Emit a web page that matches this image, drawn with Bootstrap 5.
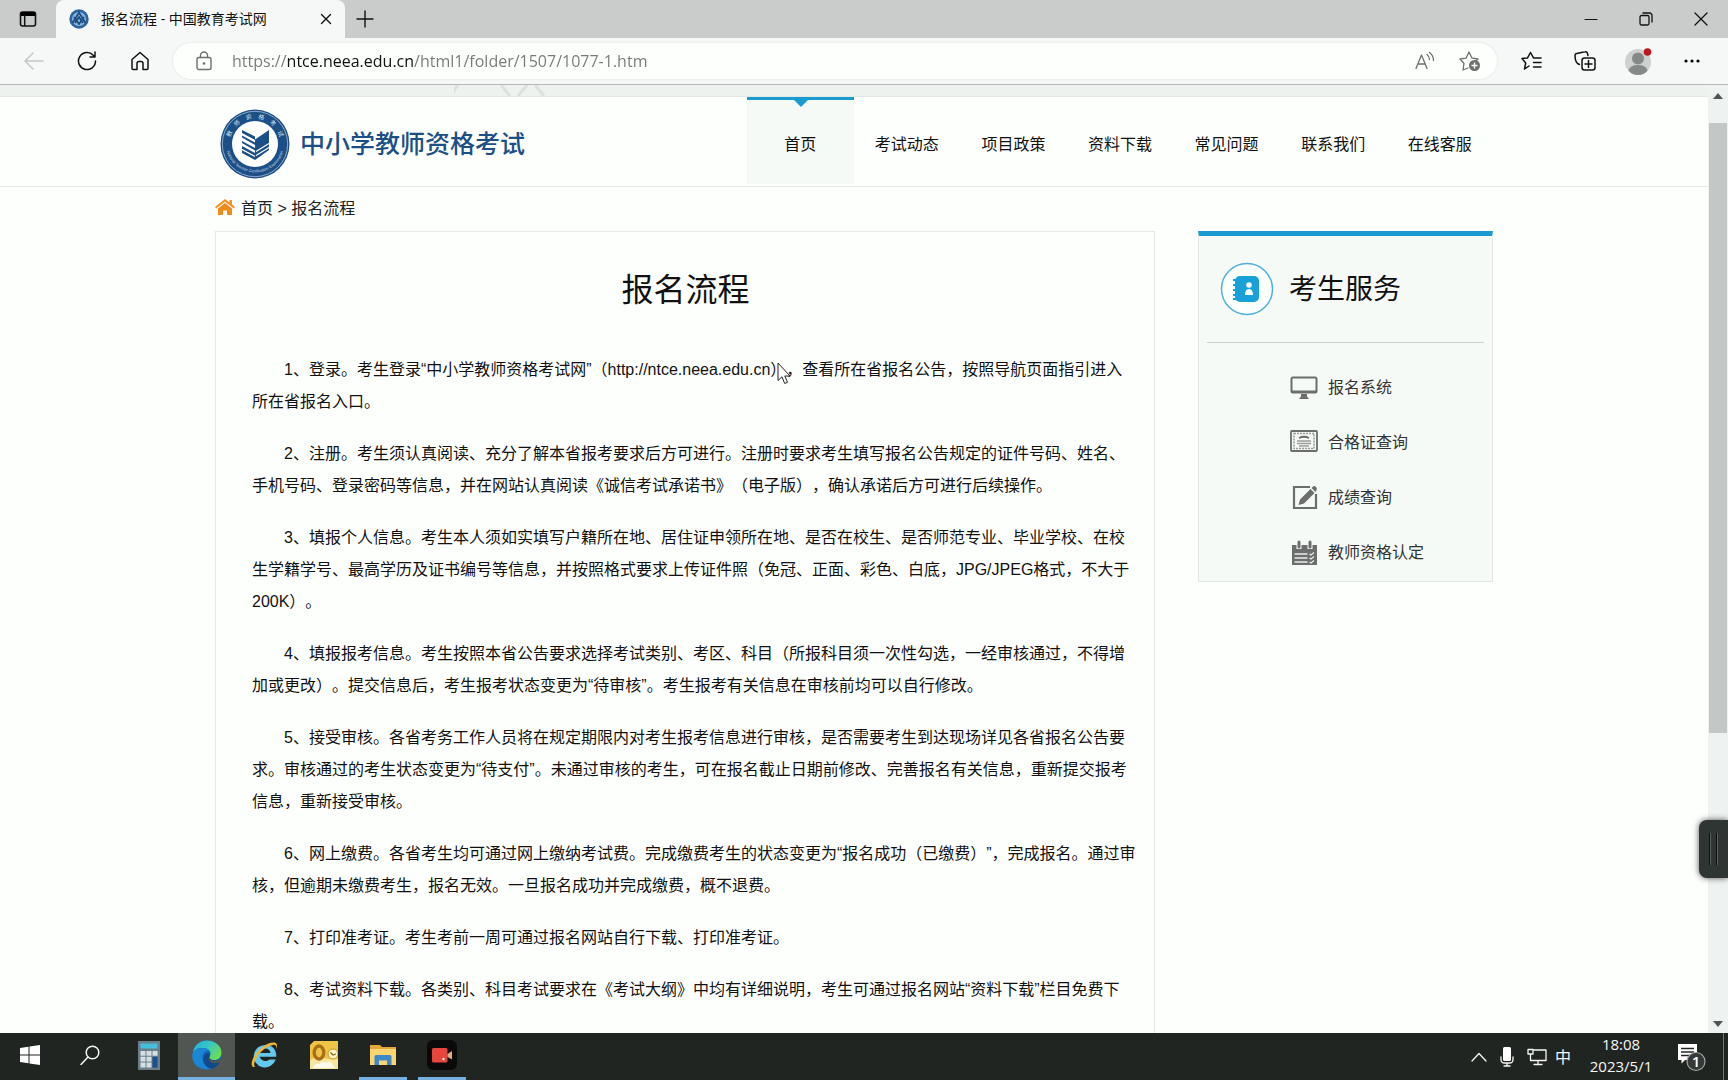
<!DOCTYPE html>
<html lang="zh-CN">
<head>
<meta charset="utf-8">
<meta name="viewport" content="width=device-width, initial-scale=1">
<title>报名流程 - 中国教育考试网</title>
<link href="https://cdn.jsdelivr.net/npm/bootstrap@5.3.0/dist/css/bootstrap.min.css" rel="stylesheet">
<style>
:root{--blue:#1a9bcf;--navy:#1c4f86}
body{font-family:"Liberation Sans","Noto Sans CJK SC",sans-serif;font-size:16px;color:#111;background:#fdfffd;line-height:24px;text-spacing-trim:space-all}
.ui-font{font-family:"Open Sans","Noto Sans CJK SC",sans-serif}
button{border:0;background:none;padding:0;color:inherit}
a{color:inherit;text-decoration:none}
svg{display:block;flex:none}
.ln{fill:none;stroke:currentColor;stroke-linecap:round;stroke-linejoin:round}
/* browser chrome */
.tabstrip{height:38px;background:#cacccb}
.tab-menu{width:56px}
.tab-open{width:289px;background:#f5f8f6;border-radius:8px 8px 0 0;padding:0 11px 0 13px;font-size:14px}
.new-tab{width:40px}
.win-btn{width:55px}
.toolbar{height:46px;background:#f5f8f6;color:#111;padding:0 8px 0 7px}
.tool-btn{width:53px;height:38px}
.tool-btn.more{width:56px}
.omnibox{height:36px;border-radius:18px;background:#fdfffd;box-shadow:0 0 2px #d5d9d7;margin:0 8px 0 7px;padding:0 16px 0 23px;color:#6d706e}
.omnibox input{border:0;outline:0;min-width:0;font-size:16px;padding:0;margin:0 16px 0 20px;color:transparent;background:linear-gradient(90deg,#767977 0 54px,#111 54px 182px,#767977 182px);-webkit-background-clip:text;background-clip:text}
.viewport-area{border-top:1px solid #b4b9b6;min-height:0}
.scroller{width:20px;background:#eef2f0;padding:8px 0 6px}
.scroll-thumb{background:#c3c7c5;margin:24px 1px 0;height:610px}
/* site */
.top-strip{height:11px;background:#eef2ef}
.site-head{border-top:1px solid #e4e8e5;border-bottom:1px solid #e4e8e5;height:91px}
.wrap{max-width:1278px;width:100%;margin:0 auto}
.brand{padding:6px 0 0 5px}
.logo-name{font-size:25px;font-weight:500;color:var(--navy);margin-left:10px}
.site-nav{width:746px}
.site-nav a{height:87px;border-top:3px solid transparent;padding-top:6px}
.site-nav a.active{border-color:var(--blue);background:#f6faf7}
.site-nav a.active::before{content:"";position:absolute;top:0;left:50%;margin-left:-6px;border:7px solid transparent;border-top-color:var(--blue);border-bottom:0}
.crumbs{height:44px;gap:6px;color:#222}
.crumbs svg{margin-bottom:4px}
.article-box{width:940px;border:1px solid #e6eae7;padding:38px 17px 0 36px;margin-right:43px}
.article-box h1{font-size:32px;line-height:40px;font-weight:400;margin:0 0 44px;padding-right:18px}
.article-box p{line-height:32px;margin:0 0 20px;text-indent:2em}
.service-box{width:295px;height:351px;border:1px solid #e2e6e3;border-top:5px solid var(--blue);background:#f6faf7}
.service-title{height:106px;padding-left:21px;font-size:28px}
.service-title h2{font-size:28px;font-weight:400;margin:2px 0 0 15px}
.service-rule{height:1px;background:#cdd1cf;margin:0 8px}
.service-list{padding:17px 0 0 91px}
.service-list a{height:55px;gap:10px;color:#333}
.service-list svg{color:#6b6e6c}
/* overlays */
.side-handle{right:0;top:820px;width:29px;height:58px;background:#2f3532;border-radius:8px 0 0 8px;box-shadow:0 0 6px #555;gap:5px}
.side-handle i{width:2px;height:32px;background:#0d100e;border-right:1px solid #59605c}
.pointer{left:777px;top:362px}
/* task bar */
.taskbar{height:48px;background:#212522;color:#f5f7f5;z-index:2}
.task{width:59px;border-bottom:3px solid transparent}
.task.start{width:60px}
.task.current{background:#525653;border-color:#76b0e0;width:57px}
.task.running{position:relative}
.task.running::after{content:"";position:absolute;left:6px;right:5px;bottom:-3px;height:3px;background:#76b0e0}
.tray button{margin-right:13px}
.tray .ime{margin-right:8px}
.tray .net{margin-right:8px}
.clock{font-size:15px;line-height:22px;width:84px;margin-right:12px;padding-bottom:3px}
</style>
</head>
<body class="vh-100 d-flex flex-column overflow-hidden position-relative">

<header class="ui-font">
  <div class="tabstrip d-flex">
    <button class="tab-menu d-flex align-items-center justify-content-center" aria-label="标签页操作"><svg width="18" height="18" viewBox="0 0 18 18"><rect x="1.5" y="2" width="15" height="14" rx="2" class="ln" stroke-width="1.6"/><path d="M2 2h14v4H2z"/><path d="M5.7 5v11" stroke="#111" stroke-width="1.5"/></svg></button>
    <div class="tab-open d-flex align-items-center">
      <svg width="20" height="20" viewBox="0 0 20 20"><circle cx="10" cy="10" r="9.7" fill="#2c659d"/><circle cx="10" cy="10" r="7" fill="#8db5d8"/><path d="M3.5 14 10 3.5 16.500 14M6 14l4-6 4 6M5 8l5 7 5-7" fill="none" stroke="#174b82" stroke-width="1.7"/></svg>
      <span class="ms-2 ps-1 me-auto">报名流程 - 中国教育考试网</span>
      <button aria-label="关闭标签页"><svg width="16" height="16" viewBox="0 0 16 16"><path d="m3.500 3.500 9 9m0-9-9 9" class="ln" stroke-width="1.4"/></svg></button>
    </div>
    <button class="new-tab d-flex align-items-center justify-content-center me-auto" aria-label="新建标签页"><svg width="18" height="18" viewBox="0 0 18 18"><path d="M9 1v16M1 9h16" class="ln" stroke-width="1.4"/></svg></button>
    <button class="win-btn d-flex align-items-center justify-content-center" aria-label="最小化"><svg width="14" height="14" viewBox="0 0 14 14"><path d="M1 7.500h12" class="ln" stroke-width="1.2"/></svg></button>
    <button class="win-btn d-flex align-items-center justify-content-center" aria-label="还原"><svg width="14" height="14" viewBox="0 0 14 14"><rect x="1" y="3.500" width="9" height="9.500" rx="1.500" class="ln" stroke-width="1.3"/><path d="M4 1h6.500A2.500 2.500 0 0 1 13 3.500V10" class="ln" stroke-width="1.3"/></svg></button>
    <button class="win-btn d-flex align-items-center justify-content-center" aria-label="关闭"><svg width="14" height="14" viewBox="0 0 14 14"><path d="m1 1 12 12m0-12L1 13" class="ln" stroke-width="1.3"/></svg></button>
  </div>
  <div class="toolbar d-flex align-items-center">
    <button class="tool-btn d-flex align-items-center justify-content-center text-black-50" aria-label="后退"><svg width="20" height="18" viewBox="0 0 20 18" opacity=".4"><path d="M19 9H1m8-8L1 9l8 8" class="ln" stroke-width="1.4"/></svg></button>
    <button class="tool-btn d-flex align-items-center justify-content-center" aria-label="刷新"><svg width="20" height="20" viewBox="0 0 20 20"><path d="M18.500 10a8.500 8.500 0 1 1-2.300-5.800L17.500 5.500M18 1v5h-5" class="ln" stroke-width="1.500"/></svg></button>
    <button class="tool-btn d-flex align-items-center justify-content-center" aria-label="主页"><svg width="20" height="20" viewBox="0 0 20 20"><path d="M2 8.500 10 1.500l8 7V17.500a1 1 0 0 1-1 1h-4v-6a2 2 0 0 0-2-2h-2a2 2 0 0 0-2 2v6H3a1 1 0 0 1-1-1z" class="ln" stroke-width="1.5"/></svg></button>
    <div class="omnibox d-flex align-items-center flex-fill">
      <svg width="16" height="20" viewBox="0 0 16 20"><rect x="1" y="6.500" width="14" height="12" rx="2" class="ln" stroke-width="1.400"/><path d="M4.500 6.500V4.500a3.500 3.500 0 0 1 7 0v2" class="ln" stroke-width="1.400"/><circle cx="8" cy="12.500" r="1.300" fill="currentColor"/></svg>
      <input class="flex-fill" type="text" aria-label="地址栏" value="https://ntce.neea.edu.cn/html1/folder/1507/1077-1.htm">
      <button class="me-4" aria-label="朗读此页"><svg width="20" height="20" viewBox="0 0 20 20"><path d="M1 17.500 6.500 4l5.500 13.500M3 13h7M12 3.500q2.500 2 2.500 5M14.500 1.500q4 3 4 8" class="ln" stroke-width="1.3"/></svg></button>
      <button aria-label="收藏此页"><svg width="22" height="22" viewBox="0 0 22 22"><path d="m9 18-5 2 1-6.500L1 9l6-.8L10 2l3 6.200 6 .8-1.500 1.500" class="ln" stroke-width="1.300"/><circle cx="15.500" cy="15.500" r="5.500" fill="currentColor"/><path d="M15.500 12.500v6m-3-3h6" stroke="#fff" stroke-width="1.400"/></svg></button>
    </div>
    <button class="tool-btn d-flex align-items-center justify-content-center" aria-label="收藏夹"><svg width="22" height="20" viewBox="0 0 22 20"><path d="m8 15-4.500 3 1.200-6L1 7.500l5.500-.6L9.500 1.500l3 5.400H20M12.500 11.500H20M12.500 16H20" class="ln" stroke-width="1.500"/></svg></button>
    <button class="tool-btn d-flex align-items-center justify-content-center" aria-label="集锦"><svg width="22" height="22" viewBox="0 0 22 22"><rect x="8" y="8" width="13" height="12" rx="2.500" class="ln" stroke-width="1.500"/><path d="M14.500 10.500v7m-3.500-3.500h7M5.500 14.500 3.500 13.500A8 8 0 0 1 1.300 9L1 5.500a2 2 0 0 1 1.700-2L11 1.800a2 2 0 0 1 2.400 1.400l.6 2.300" class="ln" stroke-width="1.500"/></svg></button>
    <button class="tool-btn d-flex align-items-center justify-content-center" aria-label="个人资料"><svg width="28" height="30" viewBox="0 0 28 30"><circle cx="14" cy="16" r="13" fill="#cdd1cf"/><circle cx="14" cy="12.500" r="6" fill="#858987"/><path d="M4.500 24.500q1.500-5.500 9.500-5.500t9.500 5.500Q20 29 14 29t-9.500-4.500z" fill="#858987"/><circle cx="23.500" cy="6" r="3.800" fill="#bd1622"/></svg></button>
    <button class="tool-btn more d-flex align-items-center justify-content-center" aria-label="设置及其他"><svg width="18" height="6" viewBox="0 0 18 6"><circle cx="3" cy="3" r="1.600"/><circle cx="9" cy="3" r="1.600"/><circle cx="15" cy="3" r="1.600"/></svg></button>
  </div>
</header>

<div class="viewport-area d-flex flex-fill overflow-hidden">
  <div class="flex-fill">
    <div class="top-strip"><svg class="mx-auto" width="800" height="11" viewBox="0 0 800 11"><path d="M4 0q-4 4-6 11M47 0l9 11M73 0l-9 11M81 0l9 11" stroke="#dce1de" stroke-width="3" fill="none"/></svg></div>
    <div class="site-head">
      <div class="wrap d-flex">
        <a href="#" class="brand d-flex align-items-center me-auto">
          <svg width="70" height="70" viewBox="0 0 70 70" role="img" aria-label="中小学教师资格考试">
            <defs><path id="arcTop" d="M9.500 35a25.500 25.500 0 0 1 51 0"/><path id="arcLow" d="M5.500 34a29.500 29.500 0 0 0 59 0"/></defs>
            <circle cx="35" cy="35" r="34.500" fill="#1c4f86"/><circle cx="35" cy="35" r="32.700" fill="none" stroke="#a9c1d8" stroke-width=".8"/><circle cx="35" cy="35" r="23" fill="#fff"/>
            <text font-size="6" fill="#d9e6f2" font-family="Noto Sans CJK SC" text-anchor="middle"><textPath href="#arcTop" startOffset="50%">教　师　资　格　考　试</textPath></text>
            <text font-size="4" fill="#c5d7e8" font-family="Liberation Sans" text-anchor="middle"><textPath href="#arcLow" startOffset="50%">National Teacher Certification Examination</textPath></text>
            <g fill="#1c4f86"><path d="M35 30.500 49 21v20L35 51 22 44v-3l13 6z"/><path d="m22 21 13 6.500V31l-13-7zM22 26.500l13 7V36l-13-7.500zM22 32l13 7v2.500L22 34zM22 37l13 7v3l-13-7z"/></g>
            <path d="m22 25 13 7m-13-1.500 13 7m-13-2 13 7m-13-2 13 7M36 42.500l13-8M36 46.500l13-8" stroke="#fff" stroke-width="1.100"/>
          </svg>
          <span class="logo-name">中小学教师资格考试</span>
        </a>
        <nav class="site-nav">
          <ul class="nav nav-fill flex-nowrap">
            <li class="nav-item w-100"><a class="active position-relative d-flex align-items-center justify-content-center" href="#">首页</a></li>
            <li class="nav-item w-100"><a class="d-flex align-items-center justify-content-center" href="#">考试动态</a></li>
            <li class="nav-item w-100"><a class="d-flex align-items-center justify-content-center" href="#">项目政策</a></li>
            <li class="nav-item w-100"><a class="d-flex align-items-center justify-content-center" href="#">资料下载</a></li>
            <li class="nav-item w-100"><a class="d-flex align-items-center justify-content-center" href="#">常见问题</a></li>
            <li class="nav-item w-100"><a class="d-flex align-items-center justify-content-center" href="#">联系我们</a></li>
            <li class="nav-item w-100"><a class="d-flex align-items-center justify-content-center" href="#">在线客服</a></li>
          </ul>
        </nav>
      </div>
    </div>
    <div class="wrap">
      <nav class="crumbs d-flex align-items-center" aria-label="当前位置">
        <svg width="20" height="17" viewBox="0 0 20 17"><path d="M10 0 0 8l1.200 1.500L10 2.700l8.800 6.800L20 8l-3-2.500V1h-2.500v2.500z" fill="#f2922b"/><path d="m10 4-7 5.500V16h5v-4.500h4V16h5V9.500z" fill="#f08a1d"/></svg>
        <span><a href="#">首页</a> &gt; <a href="#">报名流程</a></span>
      </nav>
      <div class="d-flex align-items-start">
        <main class="article-box flex-shrink-0">
          <h1 class="text-center">报名流程</h1>
          <p>1、登录。考生登录“中小学教师资格考试网”（http://ntce.neea.edu.cn），查看所在省报名公告，按照导航页面指引进入所在省报名入口。</p>
          <p>2、注册。考生须认真阅读、充分了解本省报考要求后方可进行。注册时要求考生填写报名公告规定的证件号码、姓名、手机号码、登录密码等信息，并在网站认真阅读《诚信考试承诺书》（电子版），确认承诺后方可进行后续操作。</p>
          <p>3、填报个人信息。考生本人须如实填写户籍所在地、居住证申领所在地、是否在校生、是否师范专业、毕业学校、在校生学籍学号、最高学历及证书编号等信息，并按照格式要求上传证件照（免冠、正面、彩色、白底，JPG/JPEG格式，不大于200K）。</p>
          <p>4、填报报考信息。考生按照本省公告要求选择考试类别、考区、科目（所报科目须一次性勾选，一经审核通过，不得增加或更改）。提交信息后，考生报考状态变更为“待审核”。考生报考有关信息在审核前均可以自行修改。</p>
          <p>5、接受审核。各省考务工作人员将在规定期限内对考生报考信息进行审核，是否需要考生到达现场详见各省报名公告要求。审核通过的考生状态变更为“待支付”。未通过审核的考生，可在报名截止日期前修改、完善报名有关信息，重新提交报考信息，重新接受审核。</p>
          <p>6、网上缴费。各省考生均可通过网上缴纳考试费。完成缴费考生的状态变更为“报名成功（已缴费）”，完成报名。通过审核，但逾期未缴费考生，报名无效。一旦报名成功并完成缴费，概不退费。</p>
          <p>7、打印准考证。考生考前一周可通过报名网站自行下载、打印准考证。</p>
          <p>8、考试资料下载。各类别、科目考试要求在《考试大纲》中均有详细说明，考生可通过报名网站“资料下载”栏目免费下载。</p>
        </main>
        <aside class="service-box">
          <div class="service-title d-flex align-items-center">
            <svg width="54" height="54" viewBox="0 0 54 54"><circle cx="27" cy="27" r="25.500" fill="#fbfffd" stroke="#4fb0da" stroke-width="1.500"/><rect x="15" y="14" width="24" height="26" rx="5" fill="#18a0d8"/><path d="M13 18h3m-3 5h3m-3 5h3m-3 5h3m-3 4h3" stroke="#18a0d8" stroke-width="2.200"/><circle cx="29" cy="23" r="2.800" fill="#fff"/><path d="M25 33q0-6 4-6t4 6z" fill="#fff"/></svg>
            <h2>考生服务</h2>
          </div>
          <div class="service-rule"></div>
          <div class="service-list">
            <a class="d-flex align-items-center" href="#"><svg width="28" height="24" viewBox="0 0 28 24"><rect x="1.500" y="1.500" width="25" height="15" rx="1.500" fill="none" stroke="currentColor" stroke-width="2"/><path d="M1 14.500h26v2.500H1zM11 18h6v2.500l2 2.500H9l2-2.500z" fill="currentColor"/></svg>报名系统</a>
            <a class="d-flex align-items-center" href="#"><svg width="28" height="28" viewBox="0 0 28 28"><rect x="1" y="2" width="26" height="20" rx="1" fill="none" stroke="currentColor" stroke-width="1.800"/><rect x="4" y="4.500" width="20" height="15" fill="none" stroke="#9a9d9b" stroke-width="1.600" stroke-dasharray="2 1"/><path d="M9 9q5-2.500 10 0" fill="none" stroke="currentColor" stroke-width="1.800"/><path d="M7 12h14M7 14.500h14M9 17h10" stroke="#9a9d9b" stroke-width="1.500"/></svg>合格证查询</a>
            <a class="d-flex align-items-center" href="#"><svg width="28" height="26" viewBox="0 0 28 26"><path d="M20 2H4v21h22V9" fill="none" stroke="currentColor" stroke-width="2.200"/><path d="m8.500 20 1.500-5.500L20.500 4l4 4L14 18.500zM21.500 3l1.500-1.500q1.500-1 3 .5t.5 3L25.500 7z" fill="currentColor"/></svg>成绩查询</a>
            <a class="d-flex align-items-center" href="#"><svg width="28" height="26" viewBox="0 0 28 26"><path d="M2 5h25v20H2z" fill="currentColor"/><path d="M6.500 0h5v9h-5zM17.500 0h5v9h-5z" fill="#f7faf8"/><path d="M9 2v5M20 2v5" stroke="currentColor" stroke-width="3" stroke-linecap="round"/><path d="M4.500 14h13M4.500 18h13M4.500 22h13" stroke="#e9ecea" stroke-width="1.500"/><path d="m19.500 14 1.500 1 3-2.500m-4.500 5.500 1.500 1 3-2.500m-4.500 5.500 1.500 1 3-2.500" fill="none" stroke="#e9ecea" stroke-width="1.200"/></svg>教师资格认定</a>
          </div>
        </aside>
      </div>
    </div>
  </div>
  <div class="scroller d-flex flex-column">
    <svg class="mx-auto" width="10" height="6" viewBox="0 0 10 6"><path d="M5 0 0 6h10z" fill="#505452"/></svg>
    <div class="scroll-thumb"></div>
    <svg class="mx-auto mt-auto" width="10" height="6" viewBox="0 0 10 6"><path d="M5 6 0 0h10z" fill="#505452"/></svg>
  </div>
</div>

<footer class="taskbar ui-font d-flex">
  <button class="task start d-flex align-items-center justify-content-center" aria-label="开始"><svg width="20" height="20" viewBox="0 0 20 20" fill="#fff"><path d="M0 3l8.500-1.300V9.500H0zM9.500 1.500 20 0v9.500H9.500zM0 10.500h8.500v7.800L0 17zM9.500 10.500H20V20L9.500 18.500z"/></svg></button>
  <button class="task d-flex align-items-center justify-content-center" aria-label="搜索"><svg width="20" height="20" viewBox="0 0 20 20"><circle cx="12.500" cy="7.500" r="6.300" class="ln" stroke-width="1.500"/><path d="M8 12 1 19.500" class="ln" stroke-width="1.500"/></svg></button>
  <button class="task d-flex align-items-center justify-content-center" aria-label="计算器"><svg width="22" height="29" viewBox="0 0 22 29"><path d="M0 0h22v29H0z" fill="#6b7f8a"/><path d="M2.500 2.500h17v5h-17z" fill="#45bede"/><path d="M2.500 10h5v4.800h-5zM8.500 10h5v4.800h-5zM14.500 10h5v4.800h-5zM2.500 15.800h5v4.800h-5zM8.500 15.800h5v4.800h-5zM2.500 21.600h5v5h-5zM8.500 21.600h5v5h-5z" fill="#d5dee3"/><path d="M14.500 15.800h5v10.800h-5z" fill="#1e4f8d"/></svg></button>
  <button class="task current d-flex align-items-center justify-content-center" aria-label="Microsoft Edge"><svg width="30" height="30" viewBox="0 0 30 30"><defs><linearGradient id="eg" x1="0" y1="0" x2="1" y2=".6"><stop stop-color="#2aa8df"/><stop offset=".5" stop-color="#36c6c6"/><stop offset="1" stop-color="#6adc55"/></linearGradient></defs><circle cx="15" cy="15" r="14.500" fill="#1565b5"/><path d="M.7 13C2 5 8 .5 15 .5c8.500 0 14.500 6 14.500 12 0 5-3.500 7.500-7.500 7.500-3 0-5-1.300-5-2.300s1.500-1.700 1.500-4.200c0-3-3-5.500-7.500-5.500C6 8 2 10 .7 13z" fill="url(#eg)"/><path d="M.5 14C2 9.500 6 8 10.500 8c3 0 5.500 1.300 7 3-4-1-7 2-7 6.500 0 5 3.500 10 8.500 11.300C8 31.500-1 24 .5 14z" fill="#1b87d4"/><path d="M17.500 17.500c.5 3 6 4 10.500 1.500l1 1.500C27 25 23 28 19.500 28.500 13 28 9 20 12.500 15c1-1.500 3-2 5.500-1.500.3 1.500-1 2.500-.5 4z" fill="#114a8b"/><path d="M17 17.700c0 1.600 2.500 3 5.500 3 2.300 0 4.500-.7 6-2.200l1.500 3-1.500 2.500-2.500-1.500c-4 2-9 0-10-4z" fill="#525653"/></svg></button>
  <button class="task d-flex align-items-center justify-content-center" aria-label="Internet Explorer"><svg width="28" height="28" viewBox="0 0 28 28"><path d="M18.500 18.500A6 6 0 0 1 8.700 15.800H25.200C25.800 8.500 21 4 14.500 4a11.200 11.200 0 1 0 10.200 14.500zM8.700 12q1-4.500 5.500-4.500T19.500 12z" fill="#63c9ee"/><path d="M4 26C0 27-.5 21.500 3 15.500 8 6.500 18 .5 23.500 1.500c3 .6 3 3.500 1.500 7 .8-4-.5-5-3-4.600C15 5 7 12.500 4.300 19 2.800 22.700 3 25 4 26z" fill="#eab53a"/></svg></button>
  <button class="task d-flex align-items-center justify-content-center" aria-label="Outlook"><svg width="28" height="28" viewBox="0 0 28 28"><path d="M4 0h24v28H0V4z" fill="#edc447"/><path d="M0 19q8-4 14-2t14 1v10H0z" fill="#f7e6a0"/><ellipse cx="9" cy="11.500" rx="4.800" ry="6.500" fill="none" stroke="#a96f13" stroke-width="3.300"/><circle cx="23" cy="13" r="5" fill="#fff4c9" stroke="#c7942a"/><path d="M20.500 11.500 23 14l3-1" fill="none" stroke="#91600f" stroke-width="1.200"/><path d="M3 27q1-5 6-4 3-4 7-1 5-3 7 2l2 3z" fill="#fffbe8"/></svg></button>
  <button class="task running d-flex align-items-center justify-content-center" aria-label="文件资源管理器"><svg width="26" height="22" viewBox="0 0 26 22"><path d="M0 1h10l2 2h14v18H0z" fill="#e3a83a"/><path d="M0 5h26v16H0z" fill="#fbd570"/><path d="M4.500 21V12.500q0-1.500 1.500-1.500h14q1.500 0 1.500 1.500V21h-4.500v-4.500H9V21z" fill="#3e87c8"/></svg></button>
  <button class="task running d-flex align-items-center justify-content-center" aria-label="录屏"><svg width="30" height="30" viewBox="0 0 30 30"><rect width="30" height="30" rx="6" fill="#0a0a0a"/><rect x="5" y="8" width="15.500" height="14.500" rx="1.500" fill="#e8453c"/><path d="M20.500 14 25 11v8.500L20.500 17z" fill="#d8ae86"/><circle cx="16.500" cy="19" r="1.200" fill="#fff"/></svg></button>
  <div class="tray d-flex align-items-center ms-auto">
    <button aria-label="显示隐藏的图标"><svg width="16" height="10" viewBox="0 0 16 10"><path d="m1 9 7-7.500L15 9" class="ln" stroke-width="1.300"/></svg></button>
    <button aria-label="麦克风"><svg width="14" height="20" viewBox="0 0 14 20"><rect x="3" y="0" width="8" height="14" rx="1.500" fill="#fff"/><path d="M1 10v2.500Q1 16 4.500 16h5q3.500 0 3.500-3.500V10M7 16v3M4 19h6" class="ln" stroke-width="1.300"/></svg></button>
    <button class="net" aria-label="网络"><svg width="20" height="18" viewBox="0 0 20 18"><path d="M6.500 2H19v10.500H3.500V8M11 12.500V16M7 16.500h8M1 1.500h5v4.500H1zM3.500 6v3" class="ln" stroke-width="1.300"/></svg></button>
    <button class="ime" aria-label="输入法">中</button>
    <div class="clock text-center">18:08<br>2023/5/1</div>
    <button aria-label="通知"><svg width="35" height="30" viewBox="0 0 35 30"><path d="M3 2h19v16H10l-3.500 3.500V18H3z" fill="#fff"/><path d="M6 6.500h13M6 10h13M6 13.500h10" stroke="#212522" stroke-width="1.300"/><circle cx="21" cy="19.500" r="9" fill="#353937" stroke="#a1a5a3" stroke-width="1.200"/><text x="21" y="25" text-anchor="middle" font-size="15" font-weight="600" fill="#fff">1</text></svg></button>
  </div>
  <div class="border-start border-secondary ps-1"></div>
</footer>

<button class="side-handle position-absolute d-flex align-items-center justify-content-center" aria-label="展开侧边工具"><i></i><i></i></button>
<svg class="pointer position-absolute" width="14" height="23" viewBox="0 0 14 23"><path d="M1 1v17.500l4-3.700 2.700 6.700 2.800-1.200-2.700-6.300H13z" fill="#fff" stroke="#222"/></svg>
<script src="https://cdn.jsdelivr.net/npm/bootstrap@5.3.0/dist/js/bootstrap.bundle.min.js"></script>
</body>
</html>
